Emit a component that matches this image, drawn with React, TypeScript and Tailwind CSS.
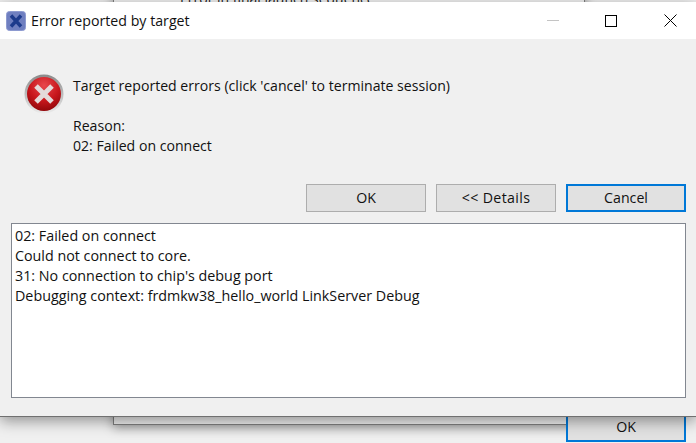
const FONT = "font-['Open_Sans','Noto_Sans',sans-serif]";

function Btn({ children, focus }: { children: React.ReactNode; focus?: boolean }) {
  return (
    <div
      className={`flex h-[28px] w-[120px] items-center justify-center bg-[#e1e1e1] text-[14.2px] text-[#111] ${
        focus ? "border-2 border-[#0078d7]" : "border border-[#adadad]"
      }`}
    >
      {children}
    </div>
  );
}

function AppIcon() {
  return (
    <svg width="20" height="20" viewBox="0 0 20 20" className="shrink-0">
      <rect x="0.5" y="0.5" width="19" height="19" rx="3" fill="#6f7fc0" stroke="#8d9ad0" />
      <path d="M5 4.5 L15 15.5 M15 4.5 L5 15.5" stroke="#1c3a8c" strokeWidth="3.4" fill="none" />
    </svg>
  );
}

function ErrorIcon() {
  return (
    <svg width="40" height="40" viewBox="0 0 40 40" className="shrink-0">
      <defs>
        <radialGradient id="e" cx="50%" cy="25%" r="80%">
          <stop offset="0%" stopColor="#e8474c" />
          <stop offset="55%" stopColor="#c8161c" />
          <stop offset="100%" stopColor="#8a0508" />
        </radialGradient>
        <linearGradient id="r" x1="0" y1="0" x2="0" y2="1">
          <stop offset="0%" stopColor="#8a8a8a" />
          <stop offset="100%" stopColor="#ececec" />
        </linearGradient>
      </defs>
      <circle cx="20" cy="20" r="19.5" fill="url(#r)" />
      <circle cx="20" cy="20" r="17" fill="url(#e)" />
      <path d="M12 12 L28 28 M28 12 L12 28" stroke="#e4dada" strokeWidth="5" fill="none" />
    </svg>
  );
}

export default function App() {
  return (
    <div className={`relative h-[443px] w-[696px] overflow-hidden bg-[#f0f0f0] ${FONT}`}>
      {/* Window behind the dialog */}
      <div className="absolute left-[113px] top-[-300px] h-[725px] w-[472px] border border-[#808080] bg-[#f0f0f0] shadow-[0_3px_10px_rgba(0,0,0,0.35)]">
        <div className="absolute left-[66px] top-[291px] text-[14px] leading-[14px] text-[#222]">
          Error in final launch sequence
        </div>
      </div>
      <div className="absolute left-[566px] top-[400px] flex h-[42px] w-[120px] items-end justify-center border-2 border-[#0078d7] bg-[#e1e1e1] pb-[3px] text-[14.2px] text-[#111]">
        OK
      </div>

      {/* Dialog */}
      <div className="absolute left-0 top-[2px] flex h-[415px] w-[696px] flex-col border-b border-[#707070] bg-[#f0f0f0] shadow-[0_4px_14px_rgba(0,0,0,0.4)]">
        <div className="flex h-[37px] shrink-0 items-center bg-white pl-[6px]">
          <AppIcon />
          <span className="ml-[5px] text-[14.2px] text-[#111]">Error reported by target</span>
          <div className="ml-auto flex items-center">
            <div className="mr-[46px] h-px w-[12px] bg-[#c4c4c4]" />
            <div className="mr-[47px] h-[12px] w-[12px] border border-black" />
            <svg width="13" height="13" viewBox="0 0 13 13" className="mr-[19px]">
              <path d="M0.5 0.5 L12.5 12.5 M12.5 0.5 L0.5 12.5" stroke="#000" strokeWidth="1" />
            </svg>
          </div>
        </div>

        <div className="flex pl-[24px] pt-[35px]">
          <ErrorIcon />
          <div className="ml-[9px] mt-[2px] text-[14.1px] leading-[20px] text-[#111]">
            <div>Target reported errors (click 'cancel' to terminate session)</div>
            <div className="mt-[20px]">Reason:</div>
            <div>02: Failed on connect</div>
          </div>
        </div>

        <div className="mt-[28px] flex justify-end gap-[10px] pr-[10px]">
          <Btn>OK</Btn>
          <Btn><span className="tracking-[0.35px]">&lt;&lt; Details</span></Btn>
          <Btn focus>Cancel</Btn>
        </div>

        <div className="ml-[11px] mr-[10px] mt-[11px] h-[175px] border border-[#828790] bg-white px-[3px] pt-[2px] text-[14.3px] leading-[20px] text-[#111]">
          <div>02: Failed on connect</div>
          <div>Could not connect to core.</div>
          <div>31: No connection to chip's debug port</div>
          <div>Debugging context: frdmkw38_hello_world LinkServer Debug</div>
        </div>
      </div>
    </div>
  );
}
